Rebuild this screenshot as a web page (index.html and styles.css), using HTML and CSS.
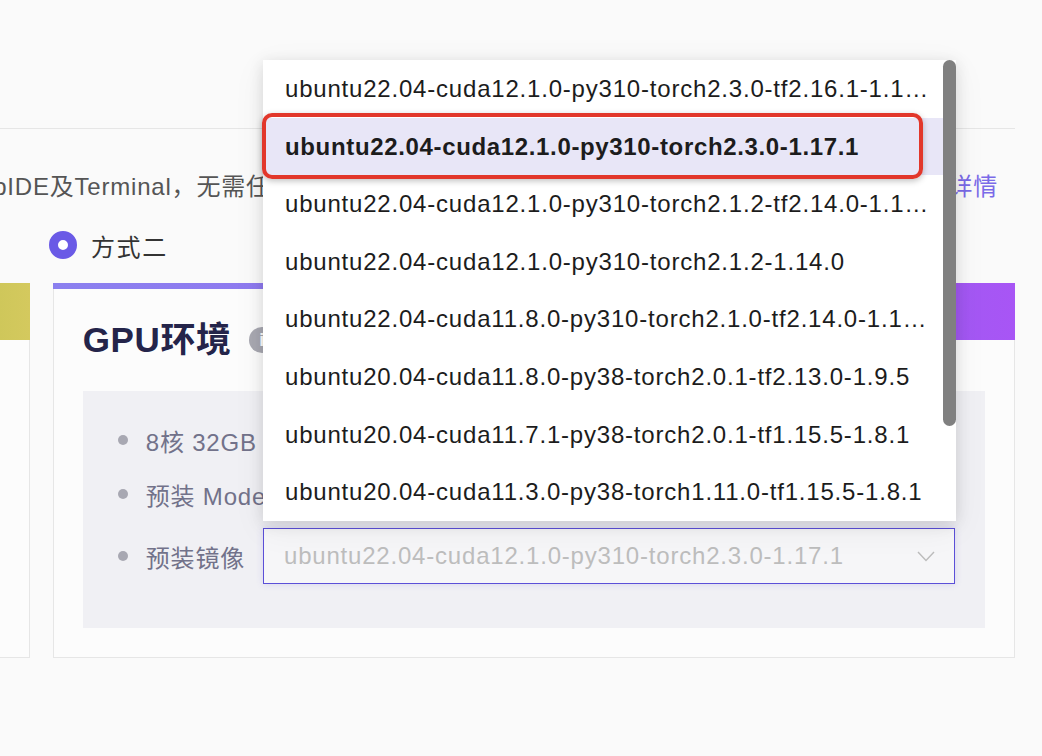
FILE: index.html
```html
<!DOCTYPE html>
<html lang="zh-CN">
<head>
<meta charset="utf-8">
<title>GPU环境</title>
<link rel="stylesheet" href="styles.css">
</head>
<body>
<div class="page">
  <div class="topbar"></div>
  <div class="desc-row">
    <span class="desc">WebIDE及Terminal，无需任何配置，开箱即用</span>
    <span class="link">查看详情</span>
  </div>
  <div class="radio-row">
    <span class="radio"></span>
    <span>方式二</span>
  </div>
  <div class="cards">
    <div class="card-left">
      <div class="badge-yellow"></div>
    </div>
    <div class="card-gpu">
      <div class="card-bar"></div>
      <div class="badge-purple"></div>
      <div class="title-row">
        <span class="title">GPU环境</span>
        <span class="info">i</span>
      </div>
      <div class="specs">
        <div class="spec"><span class="dot"></span><span>8核 32GB 内存 24G显存</span></div>
        <div class="spec"><span class="dot"></span><span>预装 ModelScope Library</span></div>
        <div class="spec select-row">
          <span class="dot"></span>
          <span class="label">预装镜像</span>
          <div class="select">
            <span>ubuntu22.04-cuda12.1.0-py310-torch2.3.0-1.17.1</span>
            <svg class="chev" width="18" height="11" viewBox="0 0 18 11"><path d="M1 1 L9 9.5 L17 1" fill="none" stroke="#bcbcbc" stroke-width="1.4"/></svg>
          </div>
        </div>
      </div>
    </div>
  </div>

  <div class="menu">
    <div class="opt">ubuntu22.04-cuda12.1.0-py310-torch2.3.0-tf2.16.1-1.16.0</div>
    <div class="opt sel">ubuntu22.04-cuda12.1.0-py310-torch2.3.0-1.17.1</div>
    <div class="opt">ubuntu22.04-cuda12.1.0-py310-torch2.1.2-tf2.14.0-1.14.0</div>
    <div class="opt">ubuntu22.04-cuda12.1.0-py310-torch2.1.2-1.14.0</div>
    <div class="opt">ubuntu22.04-cuda11.8.0-py310-torch2.1.0-tf2.14.0-1.13.1</div>
    <div class="opt">ubuntu20.04-cuda11.8.0-py38-torch2.0.1-tf2.13.0-1.9.5</div>
    <div class="opt">ubuntu20.04-cuda11.7.1-py38-torch2.0.1-tf1.15.5-1.8.1</div>
    <div class="opt">ubuntu20.04-cuda11.3.0-py38-torch1.11.0-tf1.15.5-1.8.1</div>
    <div class="scroll"></div>
  </div>
  <div class="mark"></div>
</div>
</body>
</html>
```
FILE: styles.css
```css
* { box-sizing: border-box; }
html, body { margin: 0; padding: 0; }
body {
  background: #fafafa;
  font-family: "Liberation Sans", "Noto Sans CJK SC", sans-serif;
  width: 1042px;
  height: 756px;
  overflow: hidden;
}
.page { position: relative; width: 1015px; }
.topbar { height: 129px; border-bottom: 1px solid #e6e6e6; }

.desc-row {
  display: flex;
  justify-content: space-between;
  margin-top: 41px;
  height: 34px;
  line-height: 34px;
  font-size: 24px;
  letter-spacing: 0.8px;
  padding-right: 17px;
  white-space: nowrap;
}
.desc { color: #555; margin-left: -44px; }
.link { color: #7a6ae8; }

.radio-row {
  display: flex;
  align-items: center;
  gap: 14px;
  margin-top: 27px;
  margin-left: 49px;
  height: 28px;
  font-size: 24px;
  letter-spacing: 1.6px;
  color: #333;
}
.radio {
  width: 28px; height: 28px;
  border-radius: 50%;
  border: 9px solid #6a5ae6;
  background: #fff;
}

.cards { display: flex; gap: 23px; margin-top: 24px; height: 375px; }
.card-left {
  width: 200px;
  margin-left: -170px;
  border: 1px solid #e6e6e6;
  background: #fcfcfc;
  position: relative;
}
.badge-yellow {
  position: absolute; top: -1px; right: -1px;
  width: 140px; height: 57px;
  background: linear-gradient(90deg, #bcc04c, #d4c95e);
}
.card-gpu {
  flex: 1;
  border: 1px solid #e6e6e6;
  border-top: none;
  background: #fcfcfc;
  position: relative;
  padding: 0 29px 29px;
  display: flex;
  flex-direction: column;
}
.card-bar {
  height: 6px;
  margin: 0 -30px;
  background: linear-gradient(90deg, #8b80ef, #9b62f0);
}
.badge-purple {
  position: absolute; top: 0; right: -1px;
  width: 160px; height: 57px;
  background: linear-gradient(90deg, #9a5ef0, #a855f5);
}
.title-row {
  display: flex;
  align-items: center;
  gap: 17px;
  margin-top: 31px;
  height: 40px;
}
.title { font-size: 35px; font-weight: bold; color: #24244a; line-height: 40px; letter-spacing: 0.6px; }
.info {
  width: 26px; height: 26px;
  border-radius: 50%;
  background: #a9a9b2;
  color: #fff;
  font-weight: bold;
  font-size: 18px;
  display: flex; align-items: center; justify-content: center;
}
.specs {
  margin-top: 31px;
  background: #f0f0f4;
  height: 237px;
  padding: 29px 30px 0 35px;
  display: flex;
  flex-direction: column;
  gap: 14px;
}
.spec {
  display: flex;
  align-items: center;
  gap: 18px;
  height: 40px;
  font-size: 24px;
  letter-spacing: 0.8px;
  color: #72728a;
  white-space: nowrap;
}
.spec.select-row { height: 56px; }
.dot { width: 10px; height: 10px; border-radius: 50%; background: #a8a8b2; flex: none; }
.select {
  width: 692px; height: 56px;
  border: 1px solid #5b4fd8;
  background: #f6f6f8;
  display: flex; align-items: center; justify-content: space-between;
  padding: 0 19px 0 20px;
  color: #bdbdbd;
  box-shadow: 0 0 7px rgba(91, 79, 216, 0.18);
}
.chev { flex: none; }

.menu {
  position: absolute;
  left: 263px; top: 60px;
  width: 693px; height: 461px;
  background: #fff;
  box-shadow: 0 3px 14px rgba(0, 0, 0, 0.12), 0 8px 32px rgba(0, 0, 0, 0.06);
  overflow: hidden;
}
.opt {
  height: 57.6px;
  line-height: 57.6px;
  padding: 0 24px 0 22px;
  font-size: 24px;
  letter-spacing: 0.8px;
  color: #1c1c1c;
  white-space: nowrap;
  overflow: hidden;
  text-overflow: ellipsis;
}
.opt.sel { background: #e8e6f7; font-weight: bold; letter-spacing: 0.65px; }
.scroll {
  position: absolute;
  right: 0; top: 0;
  width: 13px; height: 366px;
  border-radius: 7px;
  background: #808080;
}
.mark {
  position: absolute;
  left: 262px; top: 113px;
  width: 661px; height: 66px;
  border: 4px solid #e2372b;
  border-radius: 10px;
  box-shadow: 0 2px 6px rgba(0, 0, 0, 0.25);
}
```
